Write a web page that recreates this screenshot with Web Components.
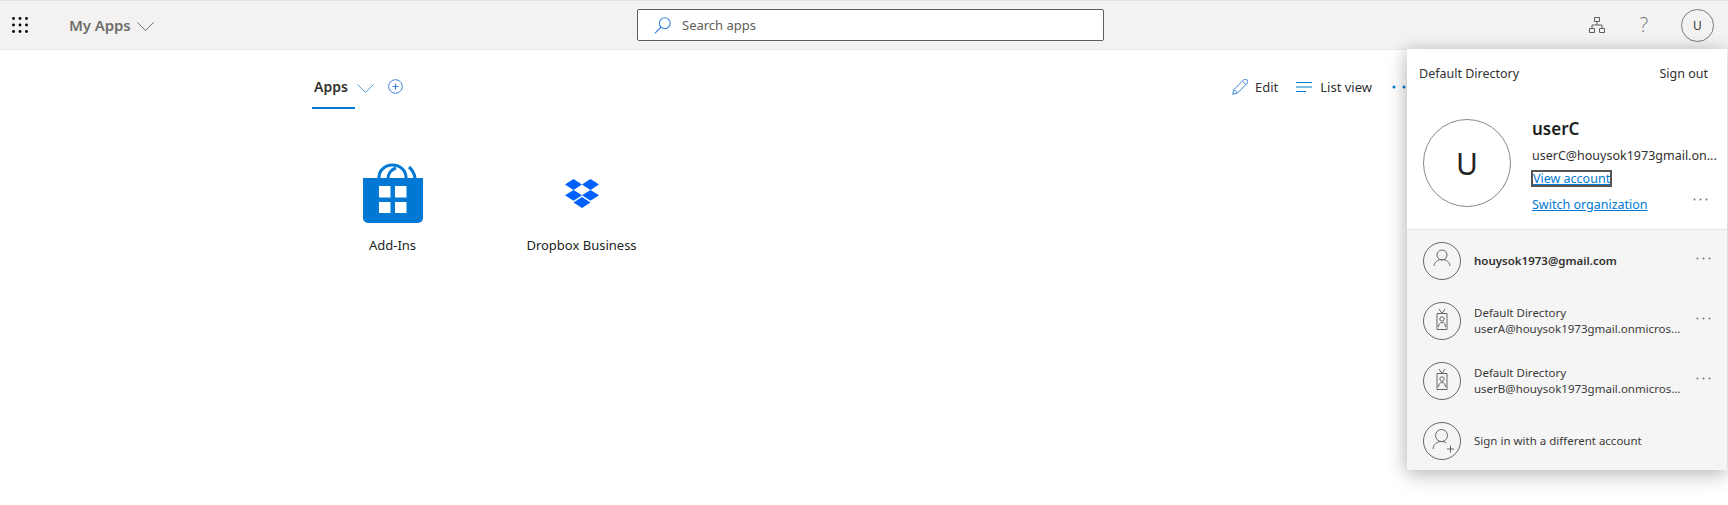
<!DOCTYPE html>
<html lang="en">
<head>
<meta charset="utf-8">
<title>My Apps</title>
<style>
  html, body { margin: 0; height: 100%; background: #fff; overflow: hidden; }
  body { font-family: "Noto Sans", "Open Sans", sans-serif; color: #252423; position: relative; }
</style>
</head>
<body>
<app-header></app-header>
<main-area>
  <app-tile label="Add-Ins" kind="store"></app-tile>
  <app-tile label="Dropbox Business" kind="dropbox"></app-tile>
</main-area>
<account-panel>
  <account-row kind="person" strong="houysok1973@gmail.com" menu></account-row>
  <account-row kind="badge" line1="Default Directory" line2="userA@houysok1973gmail.onmicros..." menu></account-row>
  <account-row kind="badge" line1="Default Directory" line2="userB@houysok1973gmail.onmicros..." menu></account-row>
  <account-row kind="add" line1="Sign in with a different account"></account-row>
</account-panel>

<script>
// ----- Header -----
class AppHeader extends HTMLElement {
  constructor() {
    super();
    const shadow = this.attachShadow({ mode: "open" });
    let dots = "";
    for (const y of [1.5, 8, 14.5]) for (const x of [1.5, 8, 14.5]) dots += `<circle cx="${x}" cy="${y}" r="1.4"/>`;
    shadow.innerHTML = `
      <style>
        :host { display: flex; align-items: center; height: 48px; background: #f3f2f1; border-top: 1px solid #dfe2e7; border-bottom: 1px solid #e8e8e8; position: relative; }
        .waffle { width: 16px; height: 16px; margin-left: 12px; fill: #000; flex: none; }
        .title { margin-left: 41px; font-size: 15px; font-weight: 600; color: #6f6e6d; letter-spacing: -.1px; }
        .chev { width: 17px; height: 9px; margin-left: 6px; margin-top: 2px; fill: none; stroke: #6f6e6d; flex: none; }
        .search { position: absolute; left: 637px; top: 8px; width: 465px; height: 30px; box-sizing: content-box; border: 1px solid #605e5c; border-radius: 2px; background: #fff; display: flex; align-items: center; }
        .search svg { width: 17px; height: 17px; margin-left: 16px; fill: none; stroke: #3a85dc; stroke-width: 1.1; }
        .search span { margin-left: 11px; font-size: 13px; color: #605e5c; }
        .right { margin-left: auto; display: flex; align-items: center; margin-right: 14px; }
        .org { width: 16px; height: 16px; fill: none; stroke: #605e5c; }
        .help { margin-left: 33px; font-size: 20px; font-weight: 300; color: #777; width: 12px; text-align: center; line-height: 1; font-family: "Open Sans", sans-serif; }
        .me { margin-left: 31px; width: 31px; height: 31px; border: 1px solid #7a7a7a; border-radius: 50%; display: flex; align-items: center; justify-content: center; font-size: 12px; color: #333; }
      </style>
      <svg class="waffle" viewBox="0 0 16 16">${dots}</svg>
      <span class="title">My Apps</span>
      <svg class="chev" viewBox="0 0 17 9"><path d="M.5.5l8 8 8-8"/></svg>
      <div class="search">
        <svg viewBox="0 0 17 17"><circle cx="10.8" cy="6.2" r="5.4"/><path d="M7 10L.8 16.3"/></svg>
        <span>Search apps</span>
      </div>
      <div class="right">
        <svg class="org" viewBox="0 0 16 16"><path d="M5.5.5h5v4h-5zM.5 11.5h5v4h-5zM10.5 11.5h5v4h-5zM8 4.5v3.5M3 11.500V8h10v3.500"/></svg>
        <span class="help">?</span>
        <div class="me">U</div>
      </div>`;
  }
}
customElements.define("app-header", AppHeader);

// ----- Tabs + commands + tile grid -----
class MainArea extends HTMLElement {
  constructor() {
    super();
    this.attachShadow({ mode: "open" }).innerHTML = `
      <style>
        :host { display: block; padding: 0 312px; }
        .bar { display: flex; align-items: flex-start; height: 60px; }
        .tab { margin-top: 18px; width: 43px; height: 41px; box-sizing: border-box; border-bottom: 2px solid #0078d4; padding-left: 2px; font-size: 14px; font-weight: 600; color: #323130; line-height: 38px; white-space: nowrap; }
        .tabchev { width: 17px; height: 9px; margin: 34px 0 0 2px; fill: none; stroke: #5a9ade; }
        .plus { width: 15px; height: 15px; margin: 29px 0 0 14px; fill: none; stroke: #3f83d8; }
        .cmds { margin-left: auto; display: flex; align-items: center; height: 38px; margin-top: 18px; font-size: 13px; color: #323130; }
        .cmds svg { flex: none; fill: none; stroke: #3a85dc; }
        .pencil { width: 16px; height: 16px; margin-right: 7px; }
        .list { width: 16px; height: 10px; margin: 0 8px 0 18px; stroke: #0078d4 !important; }
        .more { margin-left: 20px; width: 24px; height: 4px; }
        .more svg { display: block; fill: #0078d4; stroke: none; }
        .grid { display: flex; margin: 53px 0 0 -14px; }
      </style>
      <div class="bar">
        <div class="tab">Apps</div>
        <svg class="tabchev" viewBox="0 0 17 9"><path d="M.5.5l8 8 8-8"/></svg>
        <svg class="plus" viewBox="0 0 15 15"><circle cx="7.500" cy="7.500" r="6.800"/><path d="M7.500 4.500v6M4.500 7.500h6" stroke-width="1.200"/></svg>
        <div class="cmds">
          <svg class="pencil" viewBox="0 0 16 16"><path d="M.7 15.300l1.300-4.800L11.700.9a1.800 1.800 0 0 1 3.400 3.400L5.500 14zM2 10.500L5.500 14M10.500 2.200l3.300 3.300"/></svg>
          <span>Edit</span>
          <svg class="list" viewBox="0 0 16 10"><path d="M0 .5h16M0 5h16M0 9.500h10"/></svg>
          <span>List view</span>
          <div class="more"><svg width="24" height="4" viewBox="0 0 24 4"><circle cx="2" cy="2" r="1.500"/><circle cx="12" cy="2" r="1.500"/><circle cx="22" cy="2" r="1.500"/></svg></div>
        </div>
      </div>
      <div class="grid"><slot></slot></div>`;
  }
}
customElements.define("main-area", MainArea);

const TILE_ICONS = {
  store: `<svg width="60" height="60" viewBox="0 0 60 60">
      <path d="M0 15h60v40a5 5 0 0 1-5 5H5a5 5 0 0 1-5-5z" fill="#0078d4"/>
      <path d="M16 15.500V14a13.500 12 0 0 1 27 0v1.500M25 16c0-5 3-9.500 8-11M46 4c3.500 3 5.500 7 6 11.500" fill="none" stroke="#0078d4" stroke-width="3"/>
      <path d="M16 23h11.500v11.500H16zM32 23h11.500v11.500H32zM16 39h11.500v11H16zM32 39h11.500v11H32z" fill="#fff"/>
    </svg>`,
  dropbox: `<svg width="34" height="29" viewBox="0 1.800 24 20.400" style="margin-top:16px;margin-bottom:15px">
      <path fill="#0061fe" d="M6 1.807L0 5.629l6 3.822 6.001-3.822L6 1.807zM18 1.807l-6 3.822 6 3.822 6-3.822-6-3.822zM0 13.274l6 3.822 6.001-3.822L6 9.452l-6 3.822zM18 9.452l-6 3.822 6 3.822 6-3.822-6-3.822zM6 18.371l6.001 3.822 6-3.822-6-3.822L6 18.371z"/>
    </svg>`
};

class AppTile extends HTMLElement {
  connectedCallback() {
    if (this.shadowRoot) return;
    this.attachShadow({ mode: "open" }).innerHTML = `
      <style>
        :host { display: flex; flex-direction: column; align-items: center; width: 189px; flex: none; }
        .ic { height: 60px; display: flex; align-items: flex-start; }
        .lb { margin-top: 13px; font-size: 13px; color: #201f1e; line-height: 18px; white-space: nowrap; }
      </style>
      <div class="ic">${TILE_ICONS[this.getAttribute("kind")]}</div>
      <div class="lb">${this.getAttribute("label")}</div>`;
  }
}
customElements.define("app-tile", AppTile);

// ----- Account flyout -----
class AccountPanel extends HTMLElement {
  constructor() {
    super();
    this.attachShadow({ mode: "open" }).innerHTML = `
      <style>
        :host { position: absolute; top: 49px; right: 1px; width: 320px; display: block; background: #fff; box-shadow: 0 6px 20px rgba(0,0,0,.2), -2px 0 14px rgba(0,0,0,.12); font-size: 12.500px; color: #323130; }
        .top { display: flex; justify-content: space-between; padding: 0 19px 0 12px; height: 49px; align-items: center; font-size: 12.500px; margin-top: 0; }
        .me { display: flex; padding: 21px 0 0 16px; height: 110px; }
        .av { width: 86px; height: 86px; border: 1px solid #8a8886; border-radius: 50%; display: flex; align-items: center; justify-content: center; font-size: 30px; flex: none; color: #252423; }
        .info { margin-left: 21px; width: 176px; position: relative; }
        .name { font-size: 17px; font-weight: 600; line-height: 22px; margin-top: -1px; color: #201f1e; }
        .mail { line-height: 18px; margin-top: 7px; white-space: nowrap; }
        .link { color: #0078d4; white-space: nowrap; line-height: 15px; }
        .view { display: inline-block; outline: 2px solid #555; outline-offset: -1px; padding: 0 1px; margin-top: 6px; text-decoration: underline; }
        .sw { display: block; margin-top: 10px; text-decoration: underline; }
        .dots { position: absolute; right: 0; top: 79px; }
        .others { background: #f5f5f5; border-top: 1px solid #e6e6e6; padding-top: 1px; height: 239px; }
      </style>
      <div class="top"><span>Default Directory</span><span>Sign out</span></div>
      <div class="me">
        <div class="av">U</div>
        <div class="info">
          <div class="name">userC</div>
          <div class="mail">userC@houysok1973gmail.on...</div>
          <span class="link view">View account</span>
          <span class="link sw">Switch organization</span>
          <svg class="dots" width="15" height="3" viewBox="0 0 15 3" fill="#777"><circle cx="1.500" cy="1.500" r="1"/><circle cx="7.500" cy="1.500" r="1"/><circle cx="13.500" cy="1.500" r="1"/></svg>
        </div>
      </div>
      <div class="others"><slot></slot></div>`;
  }
}
customElements.define("account-panel", AccountPanel);

const ROW_ICONS = {
  person: `<path d="M11 24c.5-4 3.500-6.500 8-6.500s7.500 2.500 8 6.500" /><circle cx="19" cy="13" r="5"/>`,
  badge: `<path d="M14 11.500h10v16H14zM16 7l3 4.500L22 7"/><circle cx="19" cy="17" r="2.200"/><path d="M15.500 25c0-3 1.500-4.500 3.500-4.500s3.500 1.500 3.500 4.500"/>`,
  add: `<path d="M10 27c.5-5 4-7.500 8.500-7.500 2 0 3.700.5 5 1.500"/><circle cx="18.500" cy="13.500" r="6"/><path d="M24 27h7M27.500 23.500v7"/>`
};

class AccountRow extends HTMLElement {
  connectedCallback() {
    if (this.shadowRoot) return;
    const strong = this.getAttribute("strong");
    const l1 = this.getAttribute("line1");
    const l2 = this.getAttribute("line2");
    const text = strong ? `<div class="st">${strong}</div>`
      : `<div>${l1}</div>` + (l2 ? `<div>${l2}</div>` : "");
    this.attachShadow({ mode: "open" }).innerHTML = `
      <style>
        :host { display: flex; align-items: center; height: 60px; padding-left: 16px; position: relative; }
        .ic { width: 38px; height: 38px; flex: none; fill: none; stroke: #666; stroke-width: 1; }
        .tx { margin-left: 13px; font-size: 11.500px; line-height: 16px; color: #3b3a39; white-space: nowrap; }
        .st { font-weight: 600; color: #323130; }
        .dots { position: absolute; right: 16px; top: 26px; }
      </style>
      <svg class="ic" viewBox="0 0 38 38"><circle cx="19" cy="19" r="18.500"/>${ROW_ICONS[this.getAttribute("kind")]}</svg>
      <div class="tx">${text}</div>
      ${this.hasAttribute("menu") ? `<svg class="dots" width="15" height="3" viewBox="0 0 15 3" fill="#777"><circle cx="1.500" cy="1.500" r="1"/><circle cx="7.500" cy="1.500" r="1"/><circle cx="13.500" cy="1.500" r="1"/></svg>` : ""}`;
  }
}
customElements.define("account-row", AccountRow);
</script>
</body>
</html>
